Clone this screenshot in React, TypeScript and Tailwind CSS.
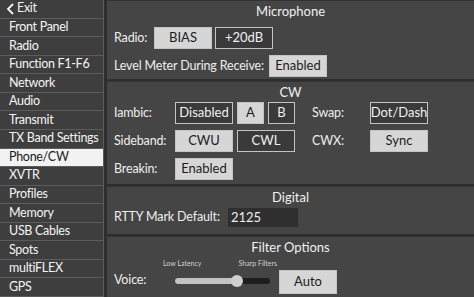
import React from 'react';

const menuItems = [
  'Front Panel',
  'Radio',
  'Function F1-F6',
  'Network',
  'Audio',
  'Transmit',
  'TX Band Settings',
  'Phone/CW',
  'XVTR',
  'Profiles',
  'Memory',
  'USB Cables',
  'Spots',
  'multiFLEX',
  'GPS',
];

const Btn: React.FC<{ on?: boolean; w?: string; children: React.ReactNode }> = ({ on, w = 'w-[58px]', children }) => (
  <div
    className={`${w} h-[22px] shrink-0 flex items-center justify-center border border-[#c4c4c4] text-[13px] tracking-normal whitespace-nowrap ${
      on ? 'bg-[#d6d6d6] text-[#1c1c1c]' : 'bg-[#3a3a3a] text-[#f0f0f0]'
    }`}
  >
    {children}
  </div>
);

const Section: React.FC<{ title: string; className?: string; children: React.ReactNode }> = ({ title, className = '', children }) => (
  <div className={`bg-[#454545] border-t border-[#333] ${className}`}>
    <div className="text-center text-[13px] leading-[20px] tracking-normal text-[#f0f0f0]">{title}</div>
    {children}
  </div>
);

export default function App() {
  return (
    <div
      className="w-[474px] h-[297px] flex bg-[#2e2e2e] overflow-hidden text-[#eeeeee] whitespace-nowrap"
      style={{ fontFamily: 'Lato, "Noto Sans", sans-serif' }}
    >
      {/* Sidebar */}
      <div className="w-[104px] h-full shrink-0 flex flex-col bg-[#3e3e3e] border-r border-[#5c5c5c] text-[12.5px] tracking-[-0.3px] text-[#f4f4f4]">
        <div className="flex-1 min-h-0 flex items-center pl-[6px] border-b border-[#5c5c5c]">
          <svg width="9" height="12" viewBox="0 0 9 12" className="mr-[2px]">
            <path d="M7 1 L2 6 L7 11" stroke="#f4f4f4" strokeWidth="1.8" fill="none" />
          </svg>
          Exit
        </div>
        {menuItems.map((item) => (
          <div
            key={item}
            className={`flex-1 min-h-0 flex items-center pl-[9px] border-b border-[#5c5c5c] ${
              item === 'Phone/CW' ? 'bg-[#f2f2f2] text-[#1c1c1c]' : ''
            }`}
          >
            {item}
          </div>
        ))}
      </div>

      {/* Content */}
      <div className="flex-1 ml-[3px] flex flex-col gap-[2px] text-[12.5px] tracking-[-0.15px]">
        <Section title="Microphone" className="h-[79px] shrink-0">
          <div className="pl-[7px] pt-[6px] flex flex-col gap-[6px]">
            <div className="flex items-center">
              <span className="w-[40px] shrink-0">Radio:</span>
              <div className="flex gap-[3px]">
                <Btn on>BIAS</Btn>
                <Btn>+20dB</Btn>
              </div>
            </div>
            <div className="flex items-center">
              <span className="w-[155px] shrink-0">Level Meter During Receive:</span>
              <Btn on>Enabled</Btn>
            </div>
          </div>
        </Section>

        <Section title="CW" className="h-[103px] shrink-0">
          <div className="pl-[7px] flex flex-col gap-[6px]">
            <div className="flex items-center">
              <span className="w-[61px] shrink-0">Iambic:</span>
              <div className="flex gap-[4px]">
                <Btn>Disabled</Btn>
                <Btn on w="w-[27px]">A</Btn>
                <Btn w="w-[27px]">B</Btn>
              </div>
              <span className="w-[58px] shrink-0 ml-[17px]">Swap:</span>
              <Btn>Dot/Dash</Btn>
            </div>
            <div className="flex items-center">
              <span className="w-[61px] shrink-0">Sideband:</span>
              <div className="flex gap-[4px]">
                <Btn on>CWU</Btn>
                <Btn>CWL</Btn>
              </div>
              <span className="w-[58px] shrink-0 ml-[17px]">CWX:</span>
              <Btn on>Sync</Btn>
            </div>
            <div className="flex items-center">
              <span className="w-[61px] shrink-0">Breakin:</span>
              <Btn on>Enabled</Btn>
            </div>
          </div>
        </Section>

        <Section title="Digital" className="h-[48px] shrink-0">
          <div className="pl-[7px] pt-[1px] flex items-center">
            <span className="w-[114px] shrink-0">RTTY Mark Default:</span>
            <div className="w-[70px] h-[19px] bg-[#2f2f2f] flex items-center pl-[3px] text-[13px] tracking-normal">2125</div>
          </div>
        </Section>

        <Section title="Filter Options" className="flex-1">
          <div className="pl-[7px] pt-[1px] flex items-end">
            <span className="w-[61px] shrink-0 pb-[4px]">Voice:</span>
            <div className="w-[110px] flex flex-col">
              <div className="flex justify-between text-[7px] tracking-normal text-[#d0d0d0] leading-[10px] -ml-[12px] pr-[8px]">
                <span>Low Latency</span>
                <span>Sharp Filters</span>
              </div>
              <div className="relative h-[26px] flex items-center">
                <div className="w-[95px] h-[6px] rounded-full bg-[#1e1e1e] overflow-hidden flex">
                  <div className="w-[62px] h-full bg-[#c2c2c2]" />
                </div>
                <div className="absolute left-[56px] top-[7px] w-[12px] h-[12px] rounded-full bg-[#cfcfcf]" />
              </div>
            </div>
            <div className="ml-[-6px]">
              <Btn on w="w-[58px] h-[24px]">Auto</Btn>
            </div>
          </div>
        </Section>
      </div>
    </div>
  );
}
